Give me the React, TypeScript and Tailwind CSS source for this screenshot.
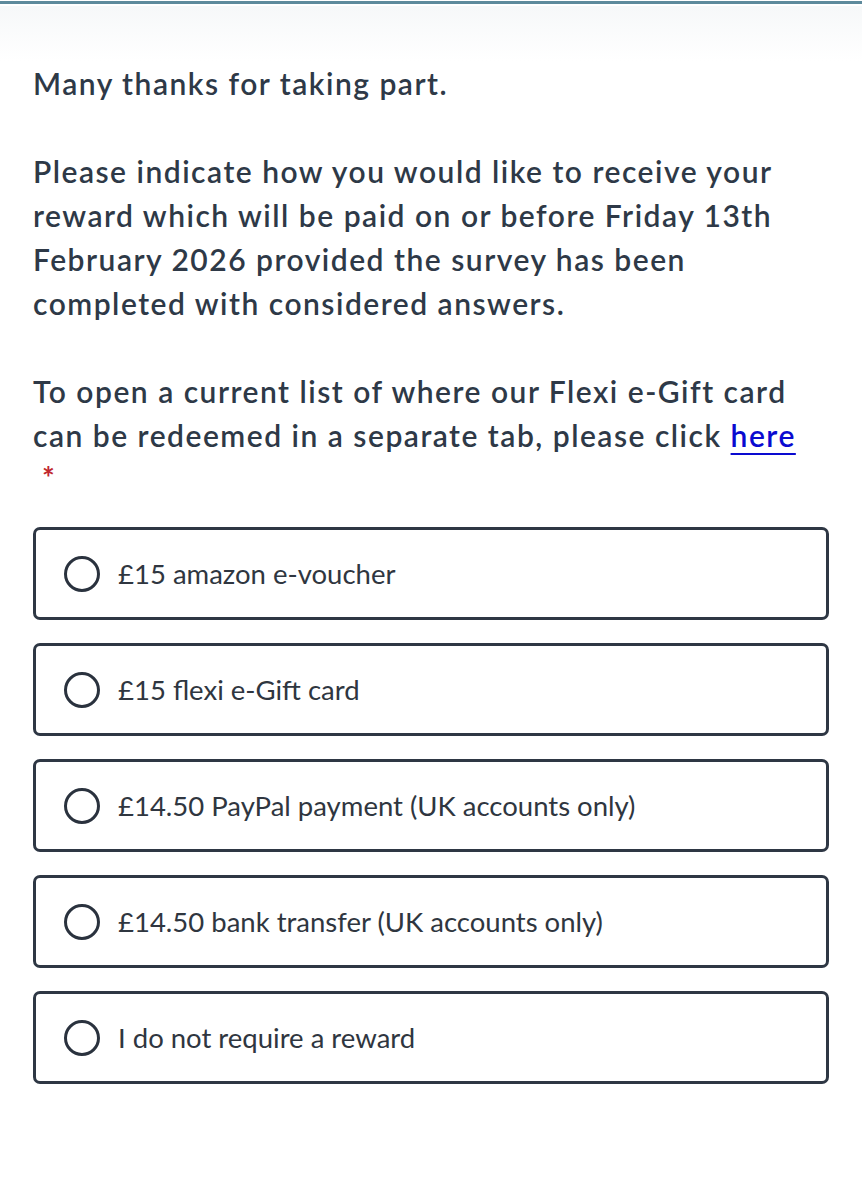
const options = [
  "£15 amazon e-voucher",
  "£15 flexi e-Gift card",
  "£14.50 PayPal payment (UK accounts only)",
  "£14.50 bank transfer (UK accounts only)",
  "I do not require a reward",
]

export default function App() {
  return (
    <div className="min-h-[1200px] bg-white font-['Lato','Noto_Sans',sans-serif] text-[#2e3947]">
      <div className="h-[5px] border-t-[3px] border-[#5d8a9c] mt-[1px]" />
      <div className="h-[55px] bg-gradient-to-b from-[#f6f8f9] to-white" />

      <div className="px-[33px]">
        {/* intro copy */}
        <div className="text-[30px] leading-[44px] font-semibold tracking-[1.5px]">
          <p>Many thanks for taking part.</p>
          <p className="mt-[44px]">
            Please indicate how you would like to receive your reward which will be paid on or before Friday 13th
            February 2026 provided the survey has been completed with considered answers.
          </p>
          <p className="mt-[44px]">
            To open a current list of where our Flexi e-Gift card can be redeemed in a separate tab, please click{" "}
            <a href="#" className="text-[#0a0ad0] underline decoration-2 underline-offset-[6px]">
              here
            </a>
          </p>
        </div>
        <div className="text-[#c0282e] text-[30px] font-bold leading-[24px] pl-[9px] pt-[8px]">*</div>

        {/* reward options */}
        <div className="mt-[38px] flex flex-col gap-[23px]">
          {options.map((label) => (
            <label
              key={label}
              className="flex items-center h-[93px] border-[3px] border-[#2e3744] rounded-[7px] pl-[28px] cursor-pointer"
            >
              <span className="w-[36px] h-[36px] rounded-full border-[3px] border-[#2a323e] shrink-0" />
              <span className="ml-[18px] text-[27.5px] text-[#2f3640]">{label}</span>
            </label>
          ))}
        </div>
      </div>
    </div>
  )
}
